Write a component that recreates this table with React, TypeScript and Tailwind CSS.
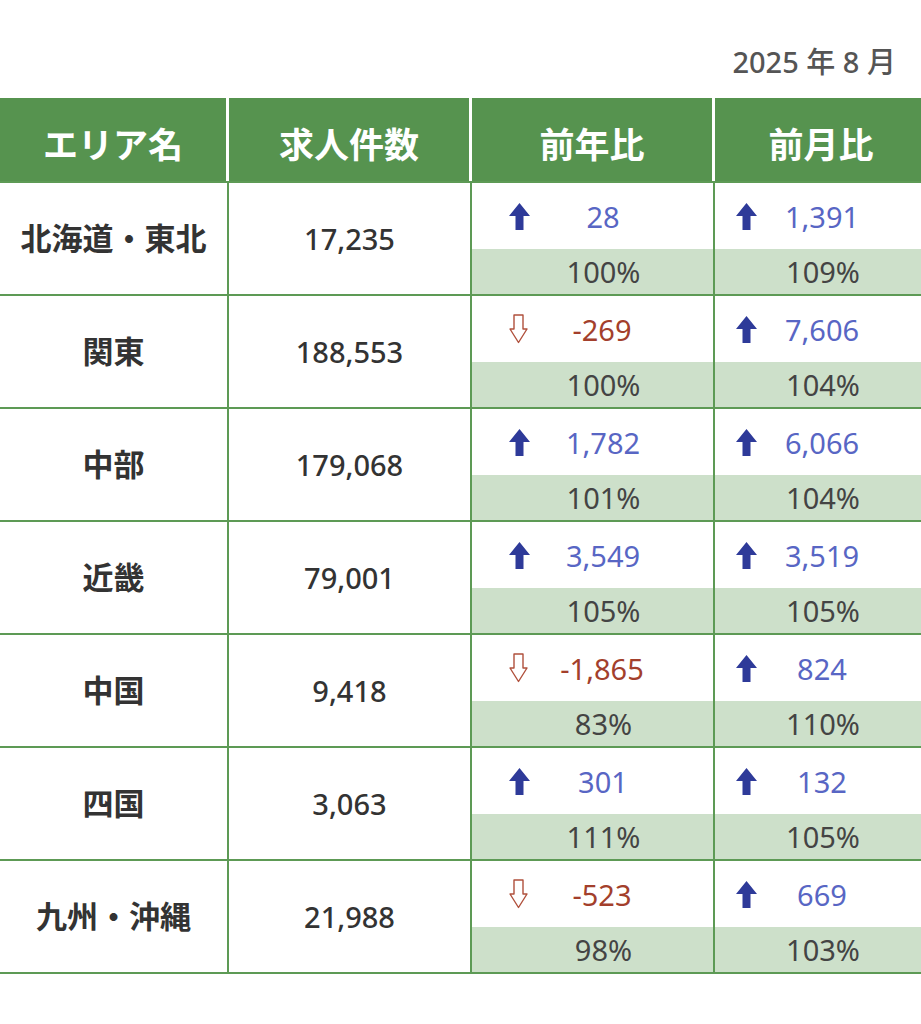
import React from "react";

type Ratio = { up: boolean; diff: string; pct: string };
type Row = { name: string; count: string; year: Ratio; month: Ratio };

const rows: Row[] = [
  { name: "北海道・東北", count: "17,235", year: { up: true, diff: "28", pct: "100%" }, month: { up: true, diff: "1,391", pct: "109%" } },
  { name: "関東", count: "188,553", year: { up: false, diff: "-269", pct: "100%" }, month: { up: true, diff: "7,606", pct: "104%" } },
  { name: "中部", count: "179,068", year: { up: true, diff: "1,782", pct: "101%" }, month: { up: true, diff: "6,066", pct: "104%" } },
  { name: "近畿", count: "79,001", year: { up: true, diff: "3,549", pct: "105%" }, month: { up: true, diff: "3,519", pct: "105%" } },
  { name: "中国", count: "9,418", year: { up: false, diff: "-1,865", pct: "83%" }, month: { up: true, diff: "824", pct: "110%" } },
  { name: "四国", count: "3,063", year: { up: true, diff: "301", pct: "111%" }, month: { up: true, diff: "132", pct: "105%" } },
  { name: "九州・沖縄", count: "21,988", year: { up: false, diff: "-523", pct: "98%" }, month: { up: true, diff: "669", pct: "103%" } },
];

function UpArrow() {
  return (
    <svg width="21" height="27" viewBox="0 0 21 27" className="shrink-0">
      <polygon points="10.5,0 21,13 14.5,13 14.5,27 6.5,27 6.5,13 0,13" fill="#2e3a99" />
    </svg>
  );
}

function DownArrow() {
  return (
    <svg width="19" height="30" viewBox="0 0 19 30" className="shrink-0">
      <polygon
        points="5,1 14,1 14,15 18,15 9.5,28.5 1,15 5,15"
        fill="none"
        stroke="#b0503c"
        strokeWidth="1.4"
        strokeLinejoin="round"
      />
    </svg>
  );
}

function RatioCell({ r, month }: { r: Ratio; month?: boolean }) {
  return (
    <div className={month ? "flex w-[212px] flex-col" : "flex w-[243px] flex-col border-r-2 border-[#5d9a55]"}>
      <div className={month ? "flex h-[66px] items-center pl-[21px]" : "flex h-[66px] items-center pl-[37px]"}>
        {r.up ? <UpArrow /> : <DownArrow />}
        <span
          className={
            (month ? "pr-[40px] " : "pr-[37px] ") +
            (r.up ? "flex-1 text-center text-[29px] text-[#5866c4]" : "flex-1 text-center text-[29px] text-[#a33f2c]")
          }
        >
          {r.diff}
        </span>
      </div>
      <div
        className={
          month
            ? "flex h-[45px] items-center justify-center bg-[#cde0ca] pl-[4px] text-[29px] text-[#444]"
            : "flex h-[45px] items-center justify-center bg-[#cde0ca] pl-[22px] text-[29px] text-[#444]"
        }
      >
        {r.pct}
      </div>
    </div>
  );
}

export default function App() {
  return (
    <div className="w-[921px] overflow-hidden bg-white font-['Noto_Sans','Noto_Sans_CJK_JP',sans-serif] leading-none">
      <div className="flex justify-end pr-[25px] pt-[47px] pb-[22px] text-[29px] font-medium text-[#555]">
        2025 年 8 月
      </div>

      <div className="w-[927px]">
        {/* Header */}
        <div className="flex h-[83px] text-[35px] font-bold text-white">
          <div className="flex w-[229px] items-center justify-center border-r-[3px] border-white bg-[#56934f] pt-[10px]">
            エリア名
          </div>
          <div className="flex w-[243px] items-center justify-center border-r-[3px] border-white bg-[#56934f] pt-[10px]">
            求人件数
          </div>
          <div className="flex w-[243px] items-center justify-center border-r-[3px] border-white bg-[#56934f] pt-[10px]">
            前年比
          </div>
          <div className="flex w-[212px] items-center justify-center bg-[#56934f] pt-[10px]">
            前月比
          </div>
        </div>

        {/* Body */}
        <div className="border-t-2 border-[#5d9a55]">
          {rows.map((row) => (
            <div key={row.name} className="flex h-[113px] border-b-2 border-[#5d9a55]">
              <div className="flex w-[229px] items-center justify-center border-r-2 border-[#5d9a55] text-[31px] font-bold text-[#333]">
                {row.name}
              </div>
              <div className="flex w-[243px] items-center justify-center border-r-2 border-[#5d9a55] text-[29px] font-medium text-[#333]">
                {row.count}
              </div>
              <RatioCell r={row.year} />
              <RatioCell r={row.month} month />
            </div>
          ))}
        </div>
      </div>
    </div>
  );
}
